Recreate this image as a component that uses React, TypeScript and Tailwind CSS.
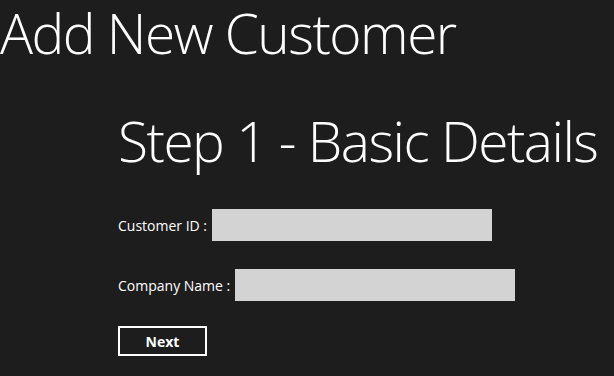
import React from 'react';

const App: React.FC = () => {
  return (
    <div className="w-[614px] h-[376px] bg-[#1d1d1d] text-white overflow-hidden font-['Open_Sans',sans-serif]">
      <h1 className="text-[55px] leading-[64px] font-light tracking-[-1.5px] whitespace-nowrap mt-px">Add New Customer</h1>
      <div className="pl-[118px] pt-[44px]">
        <h2 className="text-[55px] leading-[64px] font-light tracking-[-1.5px] whitespace-nowrap">Step 1 - Basic Details</h2>
        <div className="mt-[36px] flex flex-col">
          <div className="flex items-center gap-[5px] h-8">
            <span className="text-[14px]">Customer ID :</span>
            <input className="w-[280px] h-8 bg-[#d3d3d3] outline-none" />
          </div>
          <div className="flex items-center gap-[5px] h-8 mt-[28px]">
            <span className="text-[14px]">Company Name :</span>
            <input className="w-[280px] h-8 bg-[#d3d3d3] outline-none" />
          </div>
          <div className="mt-[25px]">
            <button className="w-[89px] h-[30px] border-2 border-white text-[14px] font-bold">Next</button>
          </div>
        </div>
      </div>
    </div>
  );
};

export default App;
